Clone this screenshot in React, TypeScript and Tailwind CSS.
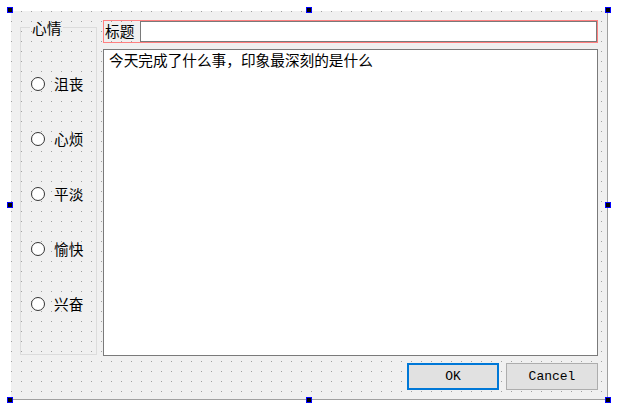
import React from "react";

const moods = ["沮丧", "心烦", "平淡", "愉快", "兴奋"];

function Handle({ cls }: { cls: string }) {
  return <div className={`absolute w-[6px] h-[6px] border border-[#0000ff] bg-black ${cls}`} />;
}

export default function App() {
  return (
    <div
      className="relative w-[618px] h-[410px] bg-white overflow-hidden text-black"
      style={{ fontFamily: '"Noto Sans CJK SC", "Noto Sans", sans-serif' }}
    >
      <div className="ml-[11px] mt-[11px] w-[597px] h-[389px] border-r border-b border-[#a0a0a0] bg-[#f0f0f0] bg-[linear-gradient(to_bottom,transparent_1px,#f0f0f0_1px),linear-gradient(to_right,#a0a0a0_1px,#f0f0f0_1px)] bg-size-[10px_10px] p-[9px] flex flex-col">
        <div className="flex gap-[6px] items-start">
          <fieldset className="w-[77px] h-[335px] border border-[#dcdcdc] min-w-0">
            <legend className="ml-[9px] px-[2px] text-[14.67px] leading-[15px]">心情</legend>
            <div className="flex flex-col pt-[38px] pl-[10px] gap-[34px]">
              {moods.map((m) => (
                <div key={m} className="flex items-center h-[21px] gap-[9px]">
                  <span className="w-[14px] h-[14px] rounded-full border border-[#333333] bg-white shrink-0" />
                  <span className="text-[14.67px] leading-[17px] whitespace-nowrap -mt-[1px]">{m}</span>
                </div>
              ))}
            </div>
          </fieldset>
          <div className="w-[495px] flex flex-col gap-[6px]">
            <div className="h-[23px] border border-[#ff8080] flex">
              <div className="w-[36px] pl-[1px] text-[14.67px] leading-[19px] whitespace-nowrap">标题</div>
              <div className="flex-1 h-[21px] border border-[#7a7a7a] bg-white" />
            </div>
            <div className="h-[307px] border border-[#7a7a7a] bg-white pl-[5px] pt-[1px] text-[14.67px] leading-[17px]">
              今天完成了什么事，印象最深刻的是什么
            </div>
          </div>
        </div>
        <div className="flex justify-end gap-[7px] mt-[7px]">
          <div
            className="w-[92px] h-[27px] border-2 border-[#0078d7] bg-[#e1e1e1] flex items-center justify-center text-[13px]"
            style={{ fontFamily: '"Liberation Mono", monospace' }}
          >
            OK
          </div>
          <div
            className="w-[92px] h-[27px] border border-[#adadad] bg-[#e1e1e1] flex items-center justify-center text-[13px]"
            style={{ fontFamily: '"Liberation Mono", monospace' }}
          >
            Cancel
          </div>
        </div>
      </div>
      <Handle cls="left-[7px] top-[7px]" />
      <Handle cls="left-[306px] top-[7px]" />
      <Handle cls="left-[605px] top-[7px]" />
      <Handle cls="left-[7px] top-[202px]" />
      <Handle cls="left-[605px] top-[202px]" />
      <Handle cls="left-[7px] top-[397px]" />
      <Handle cls="left-[306px] top-[397px]" />
      <Handle cls="left-[605px] top-[397px]" />
    </div>
  );
}
